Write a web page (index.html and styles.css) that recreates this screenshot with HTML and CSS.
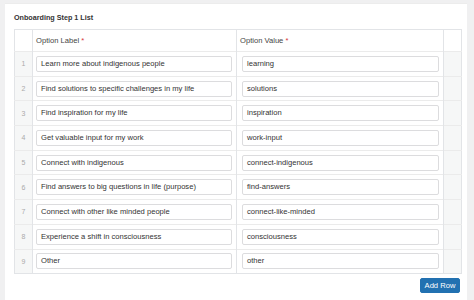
FILE: index.html
```html
<!DOCTYPE html>
<html>
<head>
<meta charset="utf-8">
<link rel="stylesheet" href="styles.css">
</head>
<body>
<div class="page">
  <div class="panel">
    <div class="title">Onboarding Step 1 List</div>
    <table class="rep">
      <colgroup>
        <col class="c-num"><col class="c-label"><col class="c-value"><col class="c-act">
      </colgroup>
      <thead>
        <tr>
          <th class="num"></th>
          <th>Option Label <span class="req">*</span></th>
          <th>Option Value <span class="req">*</span></th>
          <th class="act"></th>
        </tr>
      </thead>
      <tbody>
        <tr><td class="num">1</td><td class="lab"><div class="inp">Learn more about indigenous people</div></td><td class="val"><div class="inp">learning</div></td><td class="act"></td></tr>
        <tr><td class="num">2</td><td class="lab"><div class="inp">Find solutions to specific challenges in my life</div></td><td class="val"><div class="inp">solutions</div></td><td class="act"></td></tr>
        <tr><td class="num">3</td><td class="lab"><div class="inp">Find inspiration for my life</div></td><td class="val"><div class="inp">inspiration</div></td><td class="act"></td></tr>
        <tr><td class="num">4</td><td class="lab"><div class="inp">Get valuable input for my work</div></td><td class="val"><div class="inp">work-input</div></td><td class="act"></td></tr>
        <tr><td class="num">5</td><td class="lab"><div class="inp">Connect with indigenous</div></td><td class="val"><div class="inp">connect-indigenous</div></td><td class="act"></td></tr>
        <tr><td class="num">6</td><td class="lab"><div class="inp">Find answers to big questions in life (purpose)</div></td><td class="val"><div class="inp">find-answers</div></td><td class="act"></td></tr>
        <tr><td class="num">7</td><td class="lab"><div class="inp">Connect with other like minded people</div></td><td class="val"><div class="inp">connect-like-minded</div></td><td class="act"></td></tr>
        <tr><td class="num">8</td><td class="lab"><div class="inp">Experience a shift in consciousness</div></td><td class="val"><div class="inp">consciousness</div></td><td class="act"></td></tr>
        <tr><td class="num">9</td><td class="lab"><div class="inp">Other</div></td><td class="val"><div class="inp">other</div></td><td class="act"></td></tr>
      </tbody>
    </table>
    <div class="actions"><button class="btn">Add Row</button></div>
  </div>
</div>
</body>
</html>
```
FILE: styles.css
```css
html, body {
  margin: 0;
  padding: 0;
  background: #f0f0f1;
  font-family: "Liberation Sans", Arial, sans-serif;
  color: #333333;
}
.page {
  padding-left: 5px;
  width: 462px;
}
.panel {
  background: #fff;
  margin-top: 3px;
  border-top: 1px solid #ececec;
  padding: 9px 6px 0 9px;
  height: 297px;
  box-sizing: border-box;
}
.title {
  font-size: 7.2px;
  font-weight: bold;
  color: #333333;
  line-height: 10px;
  margin-bottom: 6px;
}
.rep {
  border-collapse: collapse;
  table-layout: fixed;
  width: 447px;
  border: 1px solid #e2e4e7;
}
.c-num { width: 18px; }
.c-label { width: 204px; }
.c-value { width: 207px; }
.c-act { width: 18px; }
.rep th {
  height: 21px;
  padding: 0 3px;
  text-align: left;
  font-weight: normal;
  font-size: 7.6px;
  color: #444444;
  border-left: 1px solid #e2e4e7;
  background: #fff;
}
.rep th.num { border-left: none; }
.req { color: #d63638; }
.rep td {
  height: 24.7px;
  padding: 0;
  border-top: 1px solid #ebebeb;
  border-left: 1px solid #e2e4e7;
  box-sizing: border-box;
  vertical-align: middle;
}
.rep td.num {
  border-left: none;
  background: #f6f7f7;
  color: #aaaaaa;
  font-size: 7px;
  text-align: center;
}
.rep td.act { background: #f6f7f7; }
.rep td.lab { padding: 0 4px 0 3px; }
.rep td.val { padding: 0 4px 0 5px; }
.inp {
  height: 16px;
  box-sizing: border-box;
  border: 1px solid #dcdcde;
  border-radius: 2px;
  padding: 0 4px;
  font-size: 7.6px;
  line-height: 14px;
  color: #333333;
  white-space: nowrap;
  overflow: hidden;
  background: #fff;
}
.actions {
  display: flex;
  justify-content: flex-end;
  padding-top: 4px;
  padding-right: 1px;
}
.btn {
  background: #2271b1;
  border: 1px solid #2271b1;
  border-radius: 2px;
  color: #fff;
  font-family: "Liberation Sans", Arial, sans-serif;
  font-size: 7.6px;
  height: 15px;
  width: 40px;
  padding: 0;
  line-height: 13px;
}
```
